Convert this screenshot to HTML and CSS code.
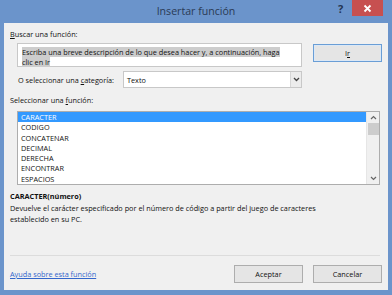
FILE: index.html
```html
<!DOCTYPE html>
<html>
<head>
<meta charset="utf-8">
<link rel="stylesheet" href="styles.css">
</head>
<body>
<div class="window">
  <div class="titlebar">
    <div class="title">Insertar función</div>
    <div class="help">?</div>
    <div class="close">
      <svg width="9" height="9" viewBox="0 0 9 9"><path d="M1.5 1.5 L7.5 7.5 M7.5 1.5 L1.5 7.5" stroke="#fff" stroke-width="1.8"/></svg>
    </div>
  </div>
  <div class="content">
    <div class="label first"><u>B</u>uscar una función:</div>
    <div class="search-row">
      <div class="search-box"><span class="sel">Escriba una breve descripción de lo que desea hacer y, a continuación, haga clic en Ir</span></div>
      <div class="btn ir">I<u>r</u></div>
    </div>
    <div class="cat-row">
      <div class="cat-label">O seleccionar una <u>c</u>ategoría:</div>
      <div class="select">
        <span>Texto</span>
        <div class="arrow"><svg width="7" height="5" viewBox="0 0 7 5"><path d="M1 1 L3.5 3.5 L6 1" fill="none" stroke="#444" stroke-width="1.3"/></svg></div>
      </div>
    </div>
    <div class="label second">Seleccionar una <u>f</u>unción:</div>
    <div class="list">
      <div class="items">
        <div class="item selected">CARACTER</div>
        <div class="item">CODIGO</div>
        <div class="item">CONCATENAR</div>
        <div class="item">DECIMAL</div>
        <div class="item">DERECHA</div>
        <div class="item">ENCONTRAR</div>
        <div class="item">ESPACIOS</div>
      </div>
      <div class="scrollbar">
        <svg class="up" width="7" height="5" viewBox="0 0 7 5"><path d="M1 4 L3.5 1.5 L6 4" fill="none" stroke="#666" stroke-width="1.2"/></svg>
        <div class="thumb"></div>
        <div class="track"></div>
        <svg class="down" width="7" height="5" viewBox="0 0 7 5"><path d="M1 1 L3.5 3.5 L6 1" fill="none" stroke="#666" stroke-width="1.2"/></svg>
      </div>
    </div>
    <div class="syntax">CARACTER(número)</div>
    <div class="desc">Devuelve el carácter especificado por el número de código a partir del juego de caracteres establecido en su PC.</div>
    <div class="spacer"></div>
    <div class="sep"></div>
    <div class="footer">
      <a class="link">Ayuda sobre esta función</a>
      <div class="buttons">
        <div class="btn">Aceptar</div>
        <div class="btn">Cancelar</div>
      </div>
    </div>
  </div>
</div>
</body>
</html>
```
FILE: styles.css
```css
html, body {
  margin: 0;
  padding: 0;
}
body {
  width: 392px;
  height: 295px;
  overflow: hidden;
  font-family: "Open Sans", "Noto Sans", sans-serif;
  font-size: 7.3px;
  color: #111;
}
.window {
  width: 392px;
  height: 295px;
  background: #6b94cb;
  box-sizing: border-box;
  padding: 0 4px 5px 4px;
  display: flex;
  flex-direction: column;
}
.titlebar {
  height: 23px;
  flex: none;
  position: relative;
}
.title {
  position: absolute;
  left: 0;
  right: 0;
  top: 4px;
  text-align: center;
  font-size: 10.6px;
  color: #2a3a55;
}
.help {
  position: absolute;
  left: 334px;
  top: 1px;
  font-size: 11px;
  font-weight: bold;
  color: #243552;
}
.close {
  position: absolute;
  left: 348px;
  top: 0;
  width: 31px;
  height: 16px;
  background: #c75050;
  display: flex;
  align-items: center;
  justify-content: center;
}
.content {
  flex: 1;
  background: #f0f0f0;
  padding: 0 6px 0 6px;
  display: flex;
  flex-direction: column;
}
.label {
  height: 12px;
  line-height: 12px;
}
.label.first {
  margin-top: 5px;
}
.search-row {
  display: flex;
  margin-top: 3px;
  margin-left: 7px;
  gap: 11px;
}
.search-box {
  width: 285px;
  height: 24px;
  box-sizing: border-box;
  border: 1px solid #c8c8c8;
  background: #fff;
  padding: 3px 12px 0 4px;
  line-height: 10px;
}
.sel {
  background: #cdcdcd;
}
.btn {
  width: 69px;
  height: 18px;
  box-sizing: border-box;
  border: 1px solid #adadad;
  background: #e5e5e5;
  display: flex;
  align-items: center;
  justify-content: center;
}
.btn.ir {
  margin-top: 1px;
  border-color: #6a9ed6;
  box-shadow: inset 0 0 0 1px #dce8f5;
}
.cat-row {
  display: flex;
  align-items: center;
  margin-top: 4px;
  margin-left: 8px;
}
.cat-label {
  width: 105px;
}
.select {
  width: 179px;
  height: 17px;
  box-sizing: border-box;
  border: 1px solid #c8c8c8;
  background: #fff;
  display: flex;
  align-items: center;
  justify-content: space-between;
  padding-left: 3px;
}
.arrow {
  width: 11px;
  height: 15px;
  box-sizing: border-box;
  border-left: 1px solid #d6d6d6;
  background: #ececec;
  display: flex;
  align-items: center;
  justify-content: center;
}
.label.second {
  margin-top: 6px;
}
.list {
  margin-top: 5px;
  margin-left: 7px;
  width: 363px;
  height: 74px;
  box-sizing: border-box;
  border: 1px solid #adadad;
  background: #fff;
  display: flex;
}
.items {
  flex: 1;
}
.item {
  height: 10.3px;
  line-height: 10.3px;
  padding-left: 3px;
}
.item.selected {
  background: #3399ff;
  color: #fff;
}
.scrollbar {
  width: 12px;
  background: #f0f0f0;
  border-left: 1px solid #e6e6e6;
  display: flex;
  flex-direction: column;
  align-items: center;
}
.scrollbar .up {
  margin-top: 3px;
}
.thumb {
  width: 11px;
  height: 12px;
  background: #cdcdcd;
  margin-top: 3px;
}
.track {
  flex: 1;
}
.scrollbar .down {
  margin-bottom: 3px;
}
.syntax {
  font-weight: bold;
  margin-top: 6px;
  line-height: 11px;
}
.desc {
  margin-top: 1px;
  line-height: 11px;
  width: 340px;
}
.spacer {
  flex: 1;
}
.sep {
  height: 1px;
  background: #dcdcdc;
  margin-right: 2px;
}
.footer {
  height: 34px;
  display: flex;
  align-items: center;
  justify-content: space-between;
}
.link {
  color: #3366cc;
  text-decoration: underline;
  margin-top: 1px;
}
.buttons {
  display: flex;
  gap: 10px;
  margin-top: 2px;
}
```
